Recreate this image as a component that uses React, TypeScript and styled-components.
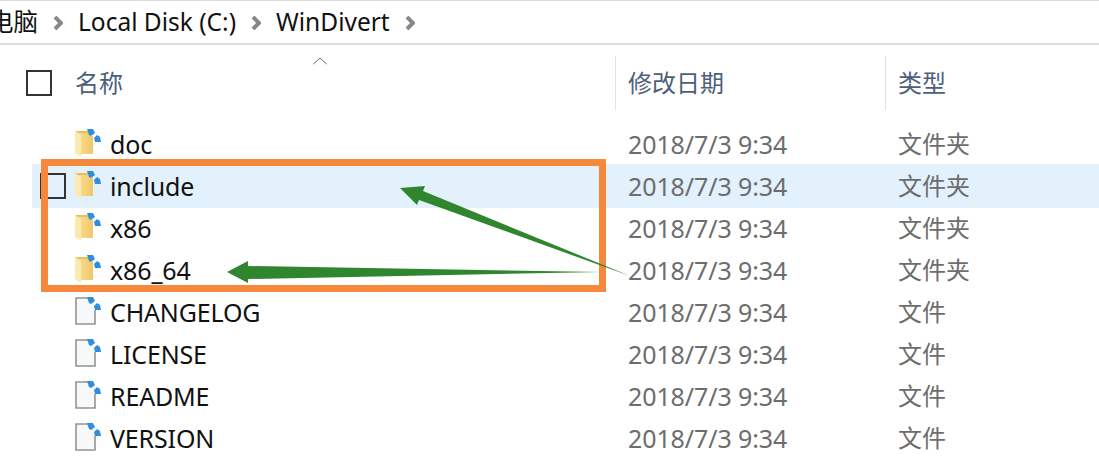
import styled, { createGlobalStyle } from "styled-components";

const GlobalStyle = createGlobalStyle`
    html, body {
        margin: 0;
        padding: 0;
        background: #fff;
    }
    body {
        font-family: "Noto Sans", "Noto Sans CJK SC", sans-serif;
    }
`;

const Page = styled.div`
    position: relative;
    width: 1099px;
    height: 458px;
    overflow: hidden;
    background: #fff;
`;

const Breadcrumb = styled.div`
    display: flex;
    align-items: center;
    height: 42px;
    border-top: 1px solid #dcdcdc;
    border-bottom: 2px solid #dddddd;
    margin-left: -11px;
    font-size: 24.5px;
    line-height: 38px;
    color: #111;
    white-space: nowrap;
`;

const Chevron = styled.svg`
    width: 10px;
    height: 14px;
    margin: 2px 15px 0;
    fill: none;
    stroke: #888;
    stroke-width: 4;
`;

const Header = styled.div`
    display: grid;
    grid-template-columns: 49px 540px 270px 1fr;
    align-items: center;
    height: 54px;
    margin-top: 11px;
    padding-left: 26px;
    font-size: 24px;
    color: #4c607a;
`;

const Check = styled.span<{ $hidden?: boolean }>`
    display: block;
    box-sizing: border-box;
    width: 26px;
    height: 26px;
    border: 2px solid #333;
    visibility: ${(p) => (p.$hidden ? "hidden" : "visible")};
`;

const HeaderCell = styled.div<{ $divider?: boolean }>`
    position: relative;
    display: flex;
    align-items: center;
    height: 100%;
    box-sizing: border-box;
    padding-left: ${(p) => (p.$divider ? "12px" : "0")};
    border-left: ${(p) => (p.$divider ? "1px solid #e3e3e3" : "none")};
`;

const HeaderLabel = styled.span`
    position: relative;
    top: -2px;
`;

const SortCaret = styled.svg`
    position: absolute;
    left: 238px;
    top: 1px;
    width: 14px;
    height: 8px;
    fill: none;
    stroke: #666;
    stroke-width: 1;
`;

const List = styled.div`
    margin-top: 13px;
`;

const Row = styled.div<{ $selected?: boolean }>`
    display: grid;
    grid-template-columns: 35px 35px 518px 270px 1fr;
    align-items: center;
    height: ${(p) => (p.$selected ? "44px" : "42px")};
    margin: ${(p) => (p.$selected ? "-1px 0" : "0")};
    margin-left: 32px;
    padding-left: 8px;
    font-size: 25px;
    line-height: 38px;
    background: ${(p) => (p.$selected ? "#e2f1fc" : "transparent")};
`;

const Name = styled.span`
    color: #111;
    letter-spacing: -0.15px;
`;

const DateText = styled.span`
    color: #6d6d6d;
    letter-spacing: -0.1px;
`;

const KindText = styled.span`
    color: #6d6d6d;
    font-size: 24px;
`;

const RowIcon = styled.svg`
    display: block;
    width: 28px;
    height: 32px;
`;

const Marker = styled.div`
    position: absolute;
    left: 41px;
    top: 159px;
    width: 565px;
    height: 133px;
    box-sizing: border-box;
    border: 7px solid #f6883b;
`;

const Arrows = styled.svg`
    position: absolute;
    left: 0;
    top: 0;
    width: 1099px;
    height: 458px;
    fill: #2f862f;
`;

function ShortcutBadge() {
    return (
        <g fill="#2f8fdc">
            <path d="M12 1h6l2 4-4 3-2-1z" />
            <path d="M19 10l3-3 3 2 1 5h-6z" />
        </g>
    );
}

function FolderIcon() {
    return (
        <RowIcon viewBox="0 0 28 32">
            <defs>
                <linearGradient id="folderBody" x1="0" x2="1" y1="0" y2="0">
                    <stop offset="0" stopColor="#fae29c" />
                    <stop offset="1" stopColor="#f2c764" />
                </linearGradient>
            </defs>
            <path d="M0 3h13l3 5h2v18H6V8z" fill="url(#folderBody)" />
            <path d="M0 3h13v2H3z" fill="#e9bf63" />
            <path d="M0 3l6 5v21l-6-4z" fill="#fdeab0" />
            <ShortcutBadge />
        </RowIcon>
    );
}

function FileIcon() {
    return (
        <RowIcon viewBox="0 0 28 32">
            <path d="M1 2h13l6 6v20H1z" fill="#f6f8fa" />
            <path d="M14 2H1v26h19V14" fill="none" stroke="#939393" strokeWidth="1.6" />
            <ShortcutBadge />
        </RowIcon>
    );
}

const entries = [
    { name: "doc", kind: "文件夹" },
    { name: "include", kind: "文件夹", selected: true },
    { name: "x86", kind: "文件夹" },
    { name: "x86_64", kind: "文件夹" },
    { name: "CHANGELOG", kind: "文件" },
    { name: "LICENSE", kind: "文件" },
    { name: "README", kind: "文件" },
    { name: "VERSION", kind: "文件" },
];

export default function App() {
    return (
        <Page>
            <GlobalStyle />
            <Breadcrumb>
                <span>电脑</span>
                <Chevron viewBox="0 0 10 14"><path d="M2 1l6 6-6 6" /></Chevron>
                <span>Local Disk (C:)</span>
                <Chevron viewBox="0 0 10 14"><path d="M2 1l6 6-6 6" /></Chevron>
                <span>WinDivert</span>
                <Chevron viewBox="0 0 10 14"><path d="M2 1l6 6-6 6" /></Chevron>
            </Breadcrumb>
            <Header>
                <Check />
                <HeaderCell>
                    <HeaderLabel>名称</HeaderLabel>
                    <SortCaret viewBox="0 0 14 8"><path d="M0.5 7L7 1l6.5 6" /></SortCaret>
                </HeaderCell>
                <HeaderCell $divider><HeaderLabel>修改日期</HeaderLabel></HeaderCell>
                <HeaderCell $divider><HeaderLabel>类型</HeaderLabel></HeaderCell>
            </Header>
            <List>
                {entries.map((e) => (
                    <Row key={e.name} $selected={e.selected}>
                        <Check $hidden={!e.selected} />
                        {e.kind === "文件夹" ? <FolderIcon /> : <FileIcon />}
                        <Name>{e.name}</Name>
                        <DateText>2018/7/3 9:34</DateText>
                        <KindText>{e.kind}</KindText>
                    </Row>
                ))}
            </List>
            <Marker />
            <Arrows viewBox="0 0 1099 458">
                <path d="M400 188L425 186L423 191L630 276L419 200L417 205z" />
                <path d="M227 272L248 261V266L601 272L248 279V283z" />
            </Arrows>
        </Page>
    );
}
